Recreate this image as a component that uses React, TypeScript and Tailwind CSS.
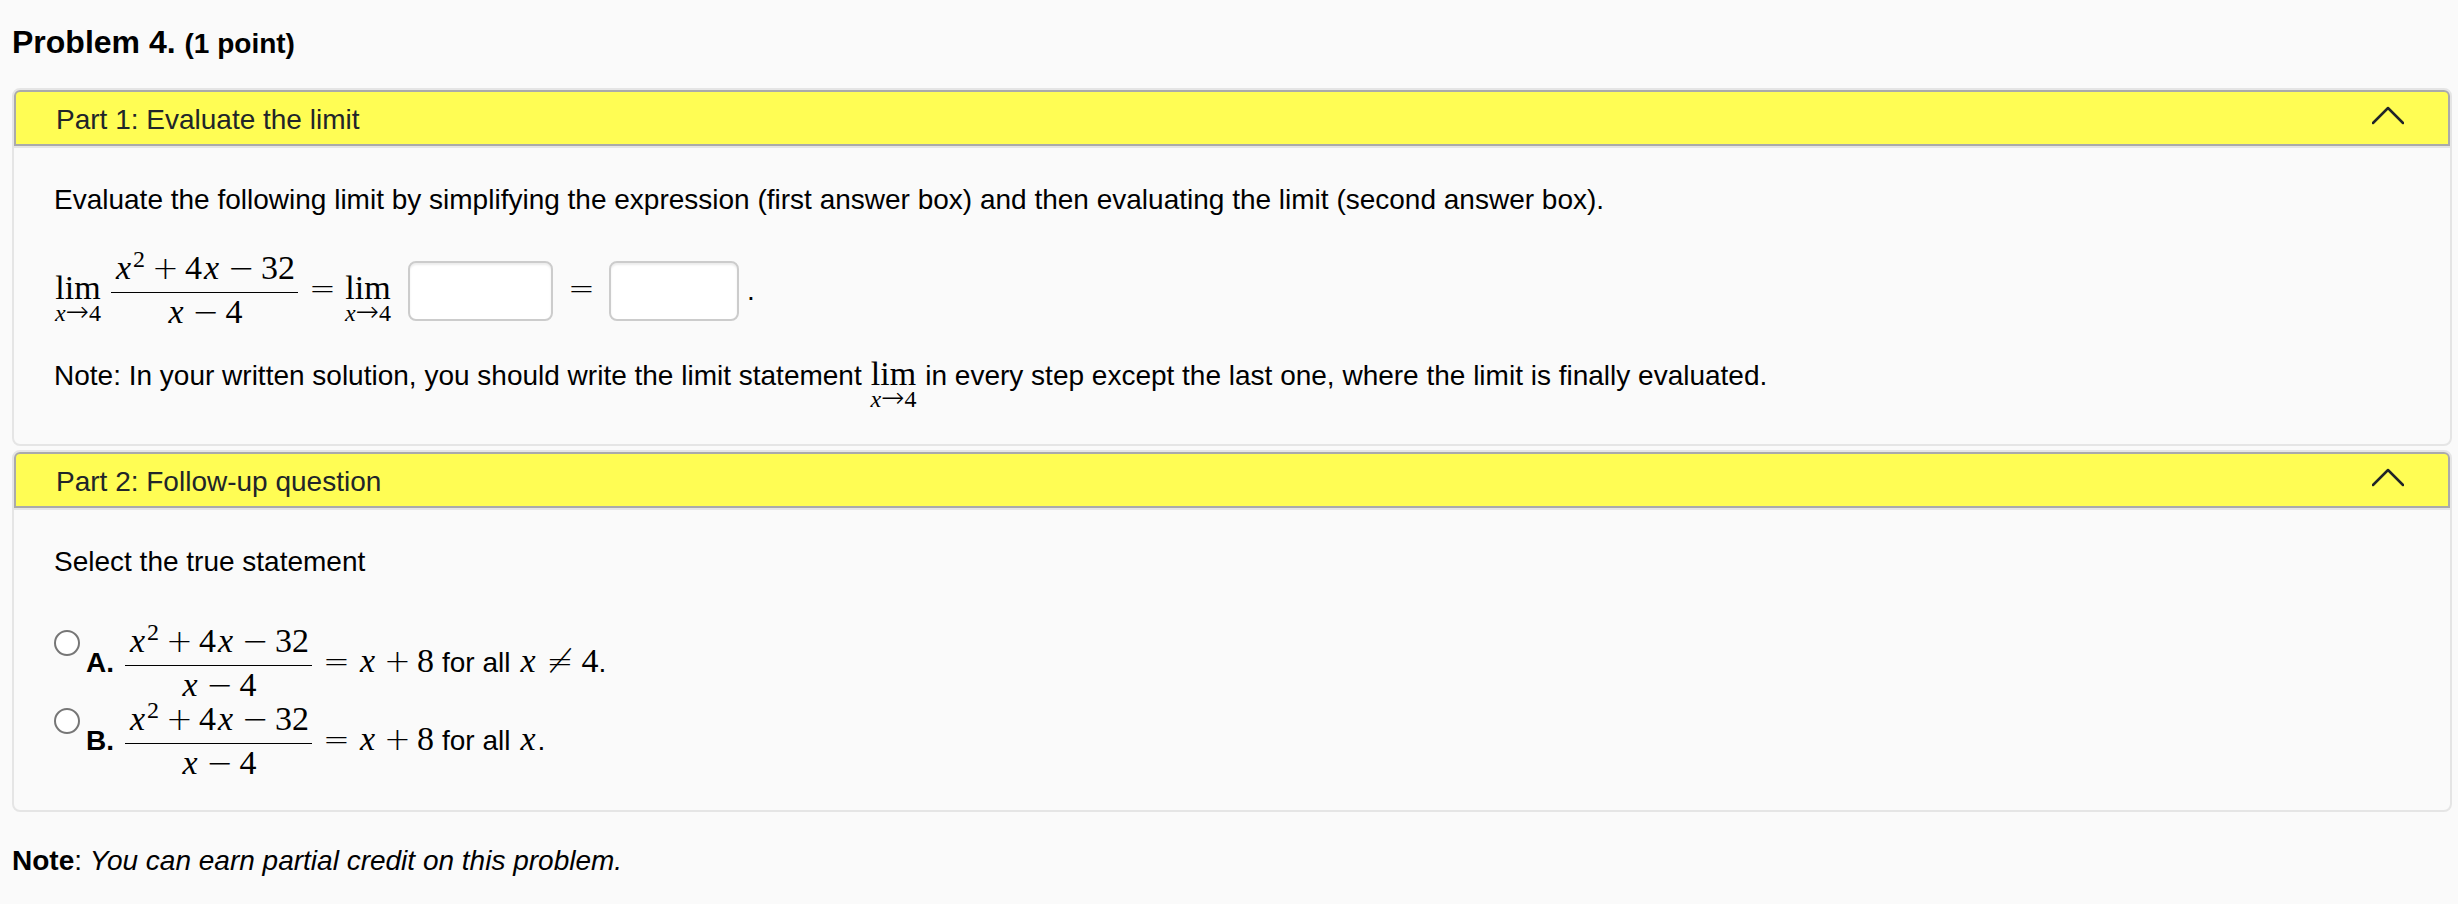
import React, { useState } from "react";

interface PartProps {
  title: string;
  children: React.ReactNode;
}

interface Choice {
  id: string;
  statement: React.ReactNode;
}

const X = () => <i className="inline-block w-[19px] text-center">x</i>;

const Op = ({ children }: { children: string }) => (
  <span className="mx-[7px] inline-block w-[26px] text-center font-['DejaVu_Sans',sans-serif] text-[32px] font-extralight leading-[24px]">
    {children}
  </span>
);

const Rel = ({ children }: { children: string }) => (
  <span className="mx-[9px] inline-block w-[26px] text-center font-['DejaVu_Sans',sans-serif] text-[32px] font-extralight leading-[34px]">
    {children}
  </span>
);

const Limit = () => (
  <span className="inline-flex w-[48px] flex-col items-center font-['Liberation_Serif',serif]">
    <span className="text-[34px] leading-[30px]">lim</span>
    <span className="flex h-[20px] items-baseline whitespace-nowrap text-[24px] leading-[20px]">
      <i>x</i>
      <span className="font-['DejaVu_Sans',sans-serif] text-[28px] font-extralight leading-[16px]">
        →
      </span>
      4
    </span>
  </span>
);

const Fraction = () => (
  <span className="mr-[2px] inline-flex w-[187px] flex-col font-['Liberation_Serif',serif] text-[34px]">
    <span className="flex items-baseline justify-center border-b border-black pb-2 leading-[32px]">
      <span className="flex h-[32px] items-baseline whitespace-nowrap">
        <X />
        <span className="relative -top-3 text-[24px] leading-none">2</span>
        <Op>+</Op>4<X />
        <Op>−</Op>32
      </span>
    </span>
    <span className="flex h-[37px] items-baseline justify-center leading-[37px]">
      <X />
      <Op>−</Op>4
    </span>
  </span>
);

// inline math next to a fraction, lined up on the fraction bar
const MathText = ({ children }: { children: React.ReactNode }) => (
  <span className="flex h-[40px] items-baseline pb-[6px] font-['Liberation_Serif',serif] text-[34px] leading-[34px]">
    {children}
  </span>
);

const Part: React.FC<PartProps> = ({ title, children }) => {
  const [open, setOpen] = useState(true);

  return (
    <section className="mb-1 rounded-lg border-2 border-[#e5e5e5]">
      <h2 className="border-b-2 border-[#e5e5e5]">
        <button
          type="button"
          aria-expanded={open}
          onClick={() => setOpen(!open)}
          className="flex h-14 w-full items-center justify-between rounded-t-md border-2 border-[#aaaaaa] bg-[#fffd54] pl-10 pr-11 text-[#212529]"
        >
          <span className="pt-1">{title}</span>
          <svg
            className={open ? "h-8 w-8" : "h-8 w-8 rotate-180"}
            viewBox="0 0 32 32"
            fill="none"
            stroke="currentColor"
            strokeWidth="2.5"
            strokeLinecap="round"
            strokeLinejoin="round"
          >
            <path d="M1 21 16 6l15 15" />
          </svg>
        </button>
      </h2>
      {open && <div className="px-10 pt-8">{children}</div>}
    </section>
  );
};

const choices: Choice[] = [
  {
    id: "A",
    statement: (
      <>
        <MathText>
          <X />
          <Rel>≠</Rel>4
        </MathText>
        <span className="pb-[2px]">.</span>
      </>
    ),
  },
  {
    id: "B",
    statement: (
      <>
        <MathText>
          <X />
        </MathText>
        <span className="pb-[2px]">.</span>
      </>
    ),
  },
];

export default function App() {
  const [simplified, setSimplified] = useState("");
  const [value, setValue] = useState("");
  const [selected, setSelected] = useState("");

  const inputStyle =
    "h-[60px] rounded-lg border-2 border-[#cccccc] bg-white px-3 shadow-[inset_0_2px_2px_rgba(0,0,0,0.075)]";

  return (
    <main className="min-h-screen bg-[#fafafa] pl-3 pr-1.5 pt-[22px] font-['Liberation_Sans',Arial,sans-serif] text-[28px] leading-[40px] text-black">
      <h1 className="mb-6 text-[32px] font-bold">
        Problem 4. <span className="text-[28px]">(1 point)</span>
      </h1>

      <Part title="Part 1: Evaluate the limit">
        <p>
          Evaluate the following limit by simplifying the expression (first answer box) and then
          evaluating the limit (second answer box).
        </p>
        <div className="mt-8 flex items-center">
          <span className="flex pt-[13px]">
            <Limit />
          </span>
          <span className="ml-[9px] flex">
            <Fraction />
          </span>
          <MathText>
            <Rel>=</Rel>
          </MathText>
          <span className="flex pt-[13px]">
            <Limit />
          </span>
          <input
            type="text"
            aria-label="Simplified expression"
            value={simplified}
            onChange={(e) => setSimplified(e.target.value)}
            className={`${inputStyle} ml-4 mr-1.5 w-[145px]`}
          />
          <MathText>
            <Rel>=</Rel>
          </MathText>
          <input
            type="text"
            aria-label="Value of the limit"
            value={value}
            onChange={(e) => setValue(e.target.value)}
            className={`${inputStyle} ml-1.5 mr-2 w-[130px]`}
          />
          <span>.</span>
        </div>
        <p className="mt-[26px] pb-[35px]">
          Note: In your written solution, you should write the limit statement <Limit /> in every
          step except the last one, where the limit is finally evaluated.
        </p>
      </Part>

      <Part title="Part 2: Follow-up question">
        <p>Select the true statement</p>
        <div className="mt-[43px] pb-[29px]">
          {choices.map((choice) => (
            <label key={choice.id} className="flex w-fit items-center">
              <input
                type="radio"
                name="statement"
                value={choice.id}
                checked={selected === choice.id}
                onChange={() => setSelected(choice.id)}
                className="mr-1.5 mt-[5px] h-[26px] w-[26px] appearance-none self-start rounded-full border-2 border-[#767676] bg-white checked:border-8 checked:border-[#0075ff]"
              />
              <b className="w-[39px] pb-[2px]">{choice.id}.</b>
              <Fraction />
              <MathText>
                <Rel>=</Rel>
                <X />
                <Op>+</Op>8
              </MathText>
              <span className="px-2 pb-[2px]">for all</span>
              {choice.statement}
            </label>
          ))}
        </div>
      </Part>

      <p className="mt-[29px] pb-6">
        <b>Note</b>: <i>You can earn partial credit on this problem.</i>
      </p>
    </main>
  );
}
